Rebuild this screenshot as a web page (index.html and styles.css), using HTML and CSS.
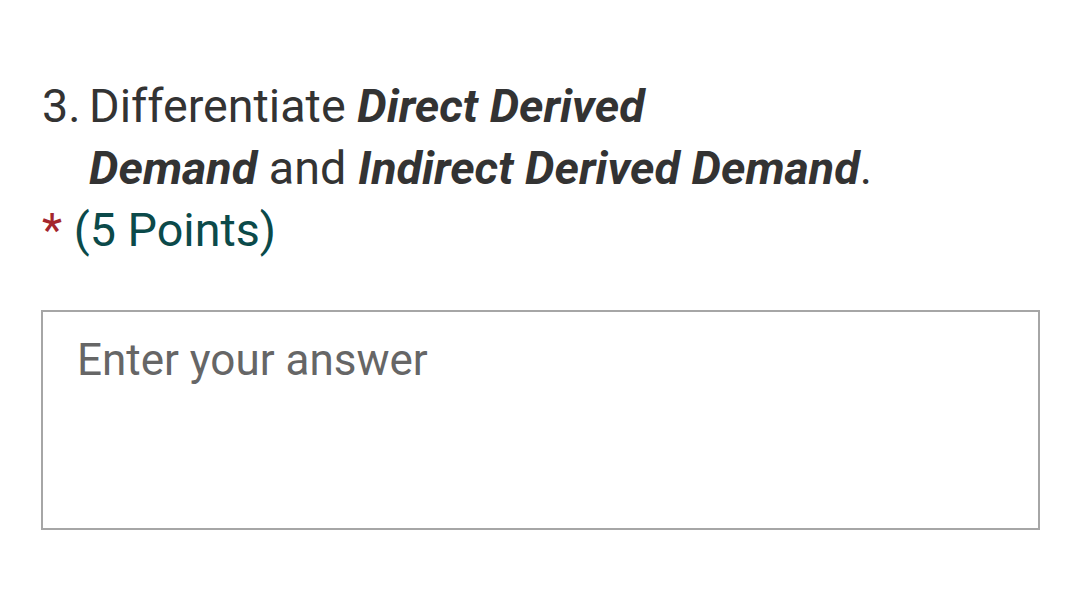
FILE: index.html
```html
<!DOCTYPE html>
<html>
<head>
<meta charset="utf-8">
<link rel="stylesheet" href="styles.css">
</head>
<body>
<div class="question">
  <div class="title-row">
    <span class="num">3.</span>
    <span class="title">Differentiate <b><i>Direct Derived</i></b><br><b><i>Demand</i></b> and <b><i>Indirect Derived Demand</i></b>.</span>
  </div>
  <div class="meta"><span class="req">*</span> <span class="points">(5 Points)</span></div>
  <div class="answer">
    <textarea class="input" placeholder="Enter your answer"></textarea>
  </div>
</div>
</body>
</html>
```
FILE: styles.css
```css
html, body {
  margin: 0;
  padding: 0;
  background: #ffffff;
}
.question {
  font-family: Roboto, "Liberation Sans", sans-serif;
  padding: 75px 41px 0 41px;
  color: #333333;
}
.title-row {
  display: flex;
  font-size: 46.7px;
  line-height: 62px;
}
.num {
  flex: none;
  width: 47px;
  padding-left: 1px;
}
.title {
  white-space: nowrap;
}
.title b {
  font-weight: 700;
}
.meta {
  font-size: 46.7px;
  line-height: 62px;
  padding-left: 1px;
}
.req {
  color: #a4262c;
}
.points {
  color: #0b4a4a;
}
.answer {
  margin-top: 49px;
}
.input {
  display: block;
  box-sizing: border-box;
  width: 999px;
  height: 220px;
  border: 2px solid #a6a6a6;
  padding: 22px 34px;
  font-family: Roboto, "Liberation Sans", sans-serif;
  font-size: 44px;
  line-height: 52px;
  color: #333;
  resize: none;
  outline: none;
  margin: 0;
}
.input::placeholder {
  color: #666666;
  opacity: 1;
}
```
